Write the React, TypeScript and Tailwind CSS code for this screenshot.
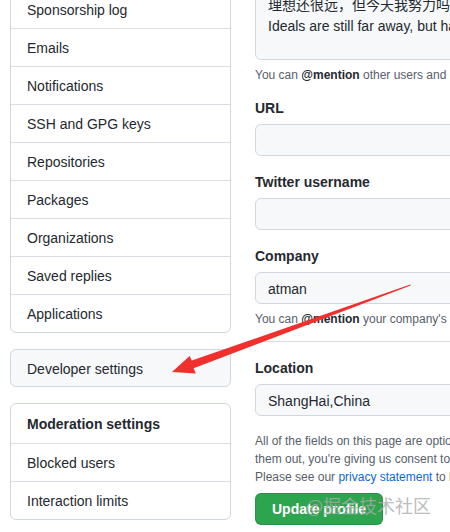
import React from "react";

const font = { fontFamily: '"Liberation Sans", "Noto Sans CJK SC", Arial, sans-serif' };

const items = [
  "Sponsorship log",
  "Emails",
  "Notifications",
  "SSH and GPG keys",
  "Repositories",
  "Packages",
  "Organizations",
  "Saved replies",
  "Applications",
];

function Arrow() {
  return (
    <svg className="absolute inset-0 pointer-events-none" width="450" height="532" viewBox="0 0 450 532">
      <polygon
        points="410.3,284.4 410.7,285.6 193.6,368.2 195.8,373.4 172,372 189.6,355.9 191.8,360.6"
        fill="#f0302c"
      />
    </svg>
  );
}

export default function App() {
  return (
    <div className="relative w-[450px] h-[532px] overflow-hidden bg-white text-[#24292f]" style={font}>
      <div className="flex items-start pl-[10px]">
        <div className="w-[221px] shrink-0 -mt-[10px] text-[14px]">
          <div className="border border-[#d0d7de] rounded-md">
            {items.map((t, i) => (
              <div
                key={t}
                className={
                  "h-[37px] flex items-center pl-4 pt-[2px] box-border " +
                  (i < items.length - 1 ? "border-b border-[#d8dee4] h-[38px]" : "")
                }
              >
                {t}
              </div>
            ))}
          </div>
          <div className="mt-4 border border-[#d0d7de] rounded-md bg-[#f6f8fa] h-[38px] flex items-center pl-4 pt-[2px]">
            Developer settings
          </div>
          <div className="mt-4 border border-[#d0d7de] rounded-md">
            <div className="h-[40px] flex items-center pl-4 pt-[2px] font-bold border-b border-[#d8dee4]">
              Moderation settings
            </div>
            <div className="h-[38px] flex items-center pl-4 pt-[2px] border-b border-[#d8dee4]">
              Blocked users
            </div>
            <div className="h-[37px] flex items-center pl-4 pt-[2px]">Interaction limits</div>
          </div>
        </div>

        <div className="ml-[24px] w-[440px] shrink-0 -mt-[40px]">
          <div className="h-[100px] border border-[#d0d7de] rounded-md bg-[#f6f8fa] pl-3 pt-[34px] text-[14px] leading-[21px] whitespace-nowrap overflow-hidden">
            <div>理想还很远，但今天我努力吗？</div>
            <div>Ideals are still far away, but have I worked hard today?</div>
          </div>
          <div className="mt-[6px] text-[12px] leading-[18px] text-[#57606a] whitespace-nowrap">
            You can <span className="font-bold text-[#24292f]">@mention</span> other users and organizations to link to them.
          </div>

          <div className="mt-[14px] text-[14px] leading-[21px] font-bold">URL</div>
          <div className="mt-[5px] h-[32px] border border-[#d0d7de] rounded-md bg-[#f6f8fa]"></div>

          <div className="mt-[16px] text-[14px] leading-[21px] font-bold">Twitter username</div>
          <div className="mt-[5px] h-[32px] border border-[#d0d7de] rounded-md bg-[#f6f8fa]"></div>

          <div className="mt-[16px] text-[14px] leading-[21px] font-bold">Company</div>
          <div className="mt-[5px] h-[32px] border border-[#d0d7de] rounded-md bg-[#f6f8fa] flex items-center pl-3 pt-[2px] text-[14px]">
            atman
          </div>
          <div className="mt-[6px] text-[12px] leading-[18px] text-[#57606a] whitespace-nowrap">
            You can <span className="font-bold text-[#24292f]">@mention</span> your company's GitHub organization to link it.
          </div>

          <div className="mt-[13px] border-t border-[#d8dee4]"></div>

          <div className="mt-[16px] text-[14px] leading-[21px] font-bold">Location</div>
          <div className="mt-[5px] h-[32px] border border-[#d0d7de] rounded-md bg-[#f6f8fa] flex items-center pl-3 pt-[2px] text-[14px]">
            ShangHai,China
          </div>

          <div className="mt-[16px] text-[12px] leading-[18px] text-[#57606a] whitespace-nowrap">
            <div>All of the fields on this page are optional and can be deleted at any time, and by filling</div>
            <div>them out, you're giving us consent to share this data wherever your user profile appears.</div>
            <div>
              Please see our <span className="text-[#0969da]">privacy statement</span> to learn more about how we use this information.
            </div>
          </div>

          <div className="mt-[7px] relative">
            <button className="h-[32px] px-4 pt-[1px] rounded-md bg-[#2da44e] border border-[rgba(27,31,36,0.15)] text-white font-bold text-[14px]">
              Update profile
            </button>
            <span className="absolute left-[51px] top-[0px] text-[18px] leading-[24px] text-[rgba(170,170,170,0.8)] whitespace-nowrap" style={{ fontFamily: '"Noto Sans CJK SC", sans-serif' }}>
              @掘金技术社区
            </span>
          </div>
        </div>
      </div>
      <Arrow />
    </div>
  );
}
